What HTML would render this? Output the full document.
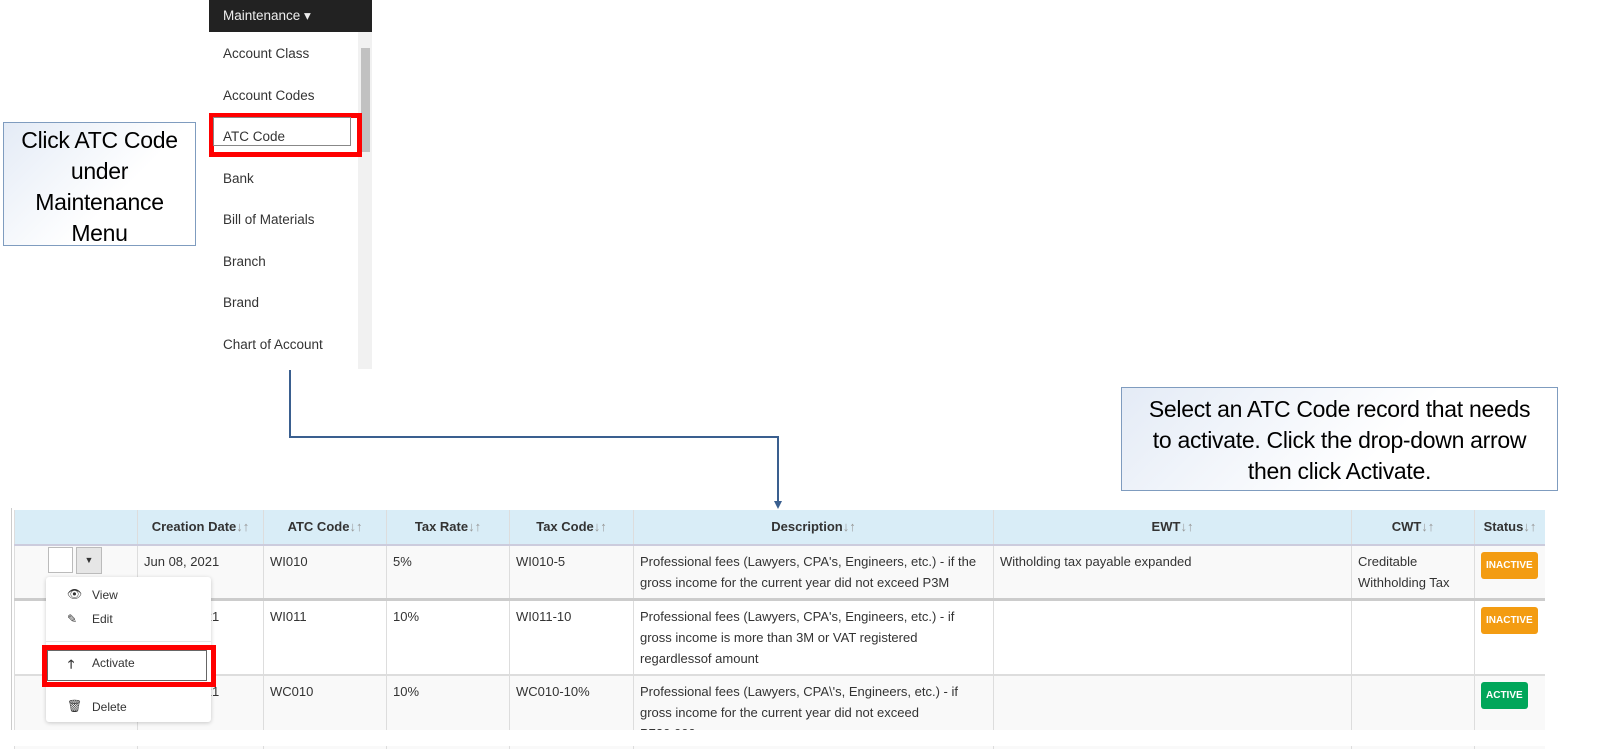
<!DOCTYPE html>
<html><head><style>
body{margin:0;width:1600px;height:746px;background:#fff;position:relative;overflow:hidden;font-family:"Liberation Sans",sans-serif;}
.a{position:absolute;}
.call{position:absolute;border:1px solid #7f9cbf;background:linear-gradient(135deg,#e4ebf6,#fff 60%);text-align:center;color:#000;font-size:23px;line-height:31px;font-family:"Liberation Sans",sans-serif;letter-spacing:-0.3px}
.mi{position:absolute;left:223px;font-size:13.5px;color:#333}
table{position:absolute;left:14px;top:510px;border-collapse:collapse;font-size:13px;color:#333}
td,th{border-left:1px solid #ddd;vertical-align:top;padding:5px 6px;line-height:21px;text-align:left}
th{background:#d9edf7;text-align:center;height:22px;font-weight:bold;border-bottom:2px solid #ccd;padding:6px}
th span{color:#999;font-weight:normal}
tr.r1 td{background:#f9f9f9;border-bottom:3px solid #ccc;height:40px}
tr.r2 td{height:60px;border-bottom:2px solid #ddd}
tr.r3 td{background:#f9f9f9;height:46px}
td.d{padding-right:16px}
.lb{display:inline-block;color:#fff;font-size:10px;font-weight:bold;padding:3px 5px;border-radius:3px;margin-top:1px}
.dm{position:absolute;font-size:12px;color:#333}
</style></head><body>
<div class="a" style="left:209px;top:0;width:163px;height:32px;background:#222;"></div>
<div class="a" style="left:223px;top:8px;color:#eee;font-size:13.5px">Maintenance ▾</div>
<div class="a" style="left:358px;top:32px;width:14px;height:337px;background:#f1f1f1"></div>
<div class="a" style="left:361px;top:48px;width:9px;height:104px;background:#c1c1c1"></div>
<div class="mi" style="top:46px">Account Class</div>
<div class="mi" style="top:88px">Account Codes</div>
<div class="a" style="left:209px;top:113px;width:143px;height:34px;border:5px solid #f00"></div>
<div class="a" style="left:213px;top:117px;width:136px;height:27px;border:1px solid #888;background:#fff"></div>
<div class="mi" style="top:129px">ATC Code</div>
<div class="mi" style="top:171px">Bank</div>
<div class="mi" style="top:212px">Bill of Materials</div>
<div class="mi" style="top:254px">Branch</div>
<div class="mi" style="top:295px">Brand</div>
<div class="mi" style="top:337px">Chart of Account</div>
<div class="call" style="left:3px;top:122px;width:193px;height:124px;padding-top:2px;box-sizing:border-box">Click ATC Code<br>under<br>Maintenance<br>Menu</div>
<div class="call" style="left:1121px;top:387px;width:437px;height:104px;padding-top:6px;box-sizing:border-box">Select an ATC Code record that needs<br>to activate. Click the drop-down arrow<br>then click Activate.</div>
<svg class="a" style="left:0;top:0" width="1600" height="746"><path d="M290 370V437H778V502" fill="none" stroke="#3a5f8f" stroke-width="2"/><path d="M774 501L778 509L782 501Z" fill="#3a5f8f"/></svg>
<div class="a" style="left:11px;top:508px;width:1px;height:222px;background:#ccc"></div>
<table>
<tr><th style="width:110px"></th><th style="width:113px">Creation Date<span>↓↑</span></th><th style="width:110px">ATC Code<span>↓↑</span></th><th style="width:110px">Tax Rate<span>↓↑</span></th><th style="width:111px">Tax Code<span>↓↑</span></th><th style="width:347px">Description<span>↓↑</span></th><th style="width:345px">EWT<span>↓↑</span></th><th style="width:110px">CWT<span>↓↑</span></th><th style="width:58px">Status<span>↓↑</span></th></tr>
<tr class="r1"><td></td><td>Jun 08, 2021</td><td>WI010</td><td>5%</td><td>WI010-5</td><td class="d">Professional fees (Lawyers, CPA's, Engineers, etc.) - if the gross income for the current year did not exceed P3M</td><td>Witholding tax payable expanded</td><td>Creditable Withholding Tax</td><td><span class="lb" style="background:#f39c12">INACTIVE</span></td></tr>
<tr class="r2"><td></td><td>Jun 08, 2021</td><td>WI011</td><td>10%</td><td>WI011-10</td><td class="d">Professional fees (Lawyers, CPA's, Engineers, etc.) - if gross income is more than 3M or VAT registered regardlessof amount</td><td></td><td></td><td><span class="lb" style="background:#f39c12">INACTIVE</span></td></tr>
<tr class="r3"><td></td><td>Jun 08, 2021</td><td>WC010</td><td>10%</td><td>WC010-10%</td><td class="d">Professional fees (Lawyers, CPA\'s, Engineers, etc.) - if gross income for the current year did not exceed P720,000</td><td></td><td></td><td><span class="lb" style="background:#00a65a">ACTIVE</span></td></tr>
</table>
<div class="a" style="left:0;top:730px;width:1600px;height:16px;background:#fff"></div>
<div class="a" style="left:48px;top:547px;width:23px;height:24px;border:1px solid #bbb;background:#fff"></div>
<div class="a" style="left:76px;top:547px;width:24px;height:25px;border:1px solid #bbb;background:#e6e6e6;font-size:9px;text-align:center;line-height:25px;color:#333">▼</div>
<div class="a" style="left:46px;top:577px;width:165px;height:145px;background:#fff;box-shadow:0 1px 4px rgba(0,0,0,.2);border-radius:3px"></div>
<div class="dm" style="left:67px;top:587px">👁</div><div class="dm" style="left:92px;top:588px">View</div>
<div class="dm" style="left:67px;top:612px">✎</div><div class="dm" style="left:92px;top:612px">Edit</div>
<div class="a" style="left:46px;top:641px;width:165px;height:1px;background:#e5e5e5"></div>
<div class="a" style="left:42px;top:645px;width:164px;height:32px;border:5px solid #f00"></div>
<div class="a" style="left:47px;top:650px;width:158px;height:29px;border:1px solid #666;background:#fff"></div>
<div class="dm" style="left:68px;top:655px;font-weight:bold">🡑</div><div class="dm" style="left:92px;top:656px">Activate</div>
<div class="dm" style="left:67px;top:699px">🗑</div><div class="dm" style="left:92px;top:700px">Delete</div>
</body></html>
